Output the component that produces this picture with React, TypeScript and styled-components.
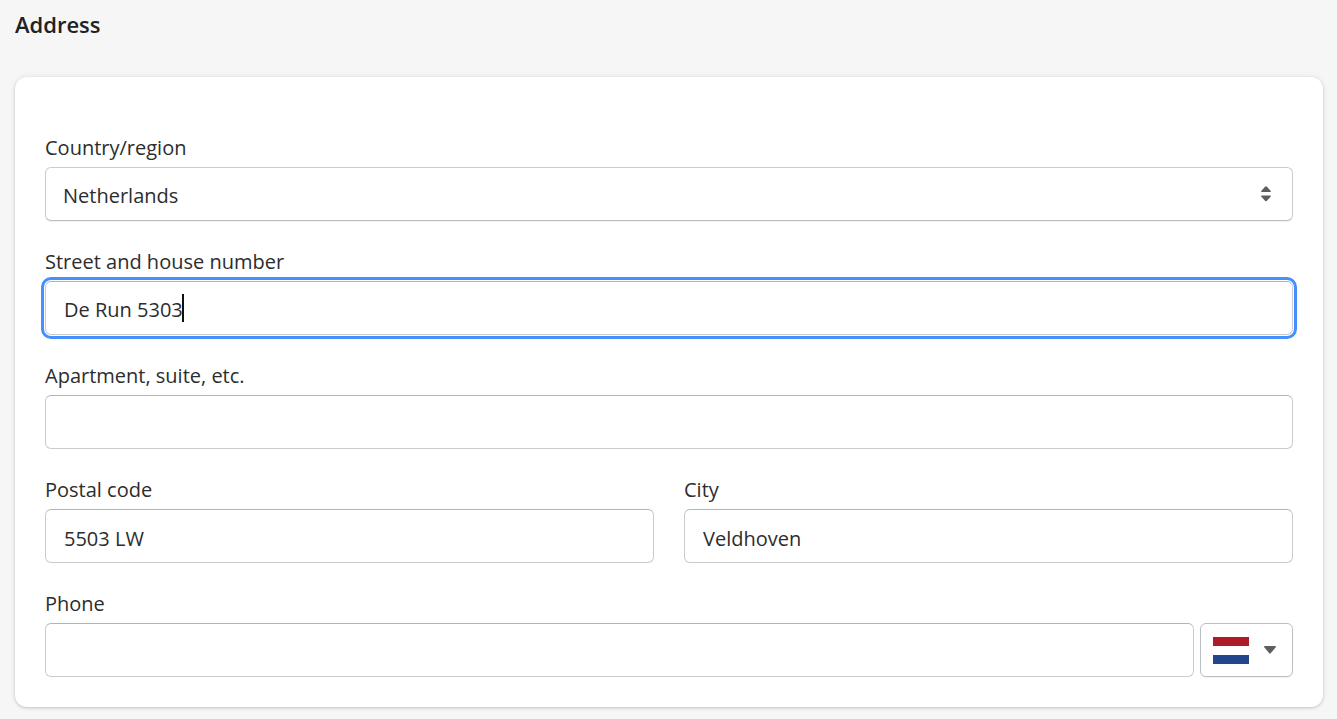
import React, { useRef, useState } from "react";
import styled, { createGlobalStyle, css } from "styled-components";

const GlobalStyle = createGlobalStyle`
  *, *::before, *::after { box-sizing: border-box; }
  body {
    margin: 0;
    background: #f6f6f6;
    color: #2b2d2e;
    font-family: "Segoe UI", "Open Sans", "Noto Sans", sans-serif;
    font-size: 20px;
    line-height: 30px;
  }
  input, select, button { font: inherit; color: inherit; }
`;

const Page = styled.main`
  padding: 9px 14px 12px 15px;
`;

const Title = styled.h2`
  margin: 0 0 38px;
  color: #202223;
  font-size: 22px;
  line-height: 30px;
  font-weight: 600;
`;

const Card = styled.form`
  display: flex;
  flex-direction: column;
  gap: 26px;
  padding: 56px 30px 30px;
  background: #fff;
  border-radius: 12px;
  box-shadow: 0 0 6px rgba(23, 24, 24, 0.07), 0 1px 3px rgba(0, 0, 0, 0.17);
`;

const Field = styled.div`
  display: flex;
  flex: 1;
  flex-direction: column;
  gap: 4px;
  min-width: 0;
`;

const FieldRow = styled.div`
  display: flex;
  gap: 30px;
`;

const PhoneRow = styled.div`
  display: flex;
  gap: 6px;
`;

const Label = styled.label`
  display: block;
`;

const frame = css`
  width: 100%;
  height: 54px;
  border: 1px solid #c9cccf;
  border-radius: 6px;
  background: #fff;
`;

const TextInput = styled.input`
  ${frame}
  min-width: 0;
  padding: 4px 18px 0;
  border-top-color: #aeb4b9;
  outline: none;
`;

const ActiveFrame = styled.div<{ $focused: boolean }>`
  ${frame}
  display: flex;
  align-items: center;
  padding: 0 18px;
  border-top-color: #aeb4b9;
  cursor: text;
  outline: ${(p) => (p.$focused ? "3px solid #458fff" : "none")};
  outline-offset: 1px;
`;

const BareInput = styled.input`
  field-sizing: content;
  min-width: 1px;
  max-width: 100%;
  padding: 4px 0 0;
  border: 0;
  outline: none;
  background: none;
  caret-color: transparent;
`;

const Caret = styled.span`
  flex: none;
  width: 2px;
  height: 28px;
  margin-left: -1px;
  background: #111;
`;

const SelectBox = styled.div`
  position: relative;
`;

const Select = styled.select`
  ${frame}
  display: block;
  appearance: none;
  padding: 4px 48px 0 17px;
  border-bottom-color: #babfc3;
  box-shadow: 0 1px 1px rgba(0, 0, 0, 0.06);
`;

const SelectArrows = styled.svg`
  position: absolute;
  top: 19px;
  right: 22px;
  pointer-events: none;
`;

const CountryButton = styled.button`
  ${frame}
  flex: none;
  width: 93px;
  display: flex;
  align-items: center;
  justify-content: space-between;
  padding: 0 16px 0 12px;
  border-color: #babfc3;
  box-shadow: 0 1px 1px rgba(0, 0, 0, 0.06);
`;

function StreetInput({ id }: { id: string }) {
  const [value, setValue] = useState("De Run 5303");
  const [focused, setFocused] = useState(true);
  const input = useRef<HTMLInputElement>(null);
  return (
    <ActiveFrame $focused={focused} onClick={() => input.current?.focus()}>
      <BareInput
        ref={input}
        id={id}
        value={value}
        onChange={(e) => setValue(e.target.value)}
        onFocus={() => setFocused(true)}
        onBlur={() => setFocused(false)}
      />
      {focused && <Caret />}
    </ActiveFrame>
  );
}

export default function App() {
  return (
    <>
      <GlobalStyle />
      <Page>
        <Title>Address</Title>
        <Card>
          <Field>
            <Label htmlFor="country">Country/region</Label>
            <SelectBox>
              <Select id="country" defaultValue="NL">
                <option value="NL">Netherlands</option>
              </Select>
              <SelectArrows width="10" height="16" viewBox="0 0 10 16" fill="#5c5f62" aria-hidden="true">
                <path d="M4.3 0.5Q5 -0.2 5.7 0.5L9.6 4.7Q10.4 6 9.2 6H0.8Q-0.4 6 0.4 4.7Z" />
                <path d="M4.3 15Q5 15.7 5.7 15L9.6 10.8Q10.4 9.5 9.2 9.5H0.8Q-0.4 9.5 0.4 10.8Z" />
              </SelectArrows>
            </SelectBox>
          </Field>
          <Field>
            <Label htmlFor="street">Street and house number</Label>
            <StreetInput id="street" />
          </Field>
          <Field>
            <Label htmlFor="apartment">Apartment, suite, etc.</Label>
            <TextInput id="apartment" />
          </Field>
          <FieldRow>
            <Field>
              <Label htmlFor="postal">Postal code</Label>
              <TextInput id="postal" defaultValue="5503 LW" />
            </Field>
            <Field>
              <Label htmlFor="city">City</Label>
              <TextInput id="city" defaultValue="Veldhoven" />
            </Field>
          </FieldRow>
          <Field>
            <Label htmlFor="phone">Phone</Label>
            <PhoneRow>
              <TextInput id="phone" type="tel" />
              <CountryButton type="button" aria-label="Phone country" aria-haspopup="listbox">
                <svg width="36" height="27" viewBox="0 0 36 27" aria-hidden="true">
                  <rect width="36" height="27" fill="#fff" />
                  <rect width="36" height="9" fill="#ae1c28" />
                  <rect y="18" width="36" height="9" fill="#21468b" />
                </svg>
                <svg width="12" height="8" viewBox="0 0 12 8" fill="#5c5f62" aria-hidden="true">
                  <path d="M0.8 0H11.2Q12.4 0.4 11.6 1.6L6.7 7.3Q6 8 5.3 7.3L0.4 1.6Q-0.4 0.4 0.8 0Z" />
                </svg>
              </CountryButton>
            </PhoneRow>
          </Field>
        </Card>
      </Page>
    </>
  );
}
